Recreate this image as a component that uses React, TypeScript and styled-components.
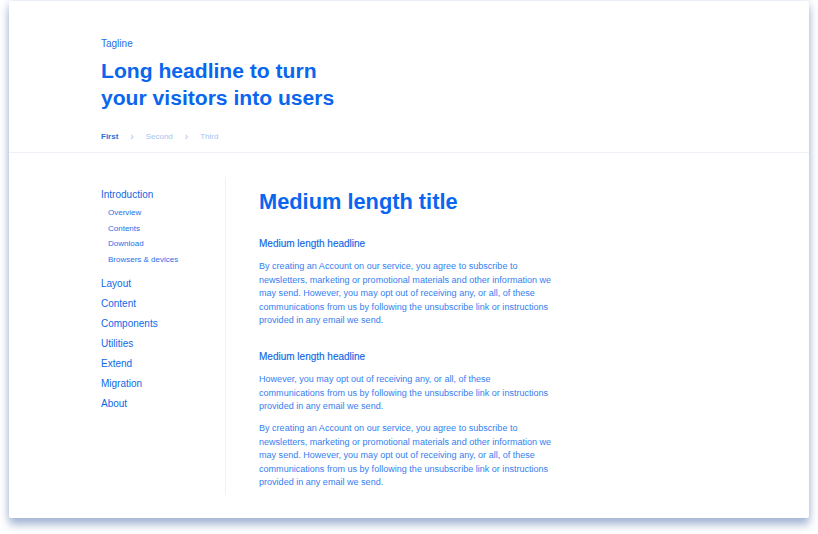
import styled, { createGlobalStyle } from "styled-components";

const GlobalStyle = createGlobalStyle`
    * {
        box-sizing: border-box;
    }
    body {
        margin: 0;
        background: #ffffff;
        font-family: "Liberation Sans", Arial, sans-serif;
    }
`;

const Page = styled.div`
    padding: 1px 9px 0;
    height: 534px;
`;

const Card = styled.div`
    width: 800px;
    height: 517px;
    background: #ffffff;
    border-radius: 2px;
    box-shadow: 0 7px 8px rgba(80, 110, 170, 0.45), 0 0 9px rgba(120, 145, 200, 0.3);
`;

const Header = styled.header`
    padding: 37px 92px 10px;
    border-bottom: 1px solid #eef2f8;
`;

const Tagline = styled.div`
    font-size: 10px;
    line-height: 12px;
    color: #1f6fe8;
`;

const Headline = styled.h1`
    margin: 7px 0 0;
    font-size: 21.1px;
    line-height: 27px;
    font-weight: 700;
    color: #0a66ee;
`;

const Crumbs = styled.nav`
    margin-top: 21px;
    display: flex;
    align-items: center;
    gap: 12px;
    font-size: 8px;
    line-height: 10px;
`;

const Crumb = styled.span<{ $active?: boolean }>`
    color: ${(props) => (props.$active ? "#2a6fd8" : "#a6c4f2")};
    font-weight: ${(props) => (props.$active ? 700 : 400)};
`;

const Sep = styled.span`
    color: #a6c4f2;
    font-size: 10px;
`;

const Body = styled.div`
    display: flex;
    padding: 24px 0 0 92px;
`;

const Sidebar = styled.aside`
    width: 125px;
    height: 318px;
    padding-top: 8px;
    border-right: 1px solid #eef2f8;
`;

const NavItem = styled.div`
    font-size: 10px;
    line-height: 20px;
    color: #0f67e6;
`;

const SubList = styled.div`
    padding: 0 0 7px 7px;
`;

const SubItem = styled.div`
    font-size: 8px;
    line-height: 15.6px;
    color: #1f6fe8;
`;

const Main = styled.main`
    padding: 10.5px 0 0 33px;
    width: 340px;
`;

const Title = styled.h2`
    margin: 0;
    font-size: 21.8px;
    line-height: 27px;
    font-weight: 700;
    color: #0a66ee;
`;

const Section = styled.section`
    margin-top: 23.5px;
    & + & {
        margin-top: 23.5px;
    }
`;

const SubHead = styled.h3`
    margin: 0 0 10px;
    font-size: 10px;
    line-height: 12px;
    font-weight: 400;
    color: #0f67e6;
    -webkit-text-stroke: 0.15px #0f67e6;
`;

const Para = styled.p`
    margin: 0;
    width: 298px;
    font-size: 9.05px;
    line-height: 13.5px;
    color: #3580ef;
    & + & {
        margin-top: 8.5px;
    }
`;

const subItems = ["Overview", "Contents", "Download", "Browsers & devices"];
const navItems = ["Layout", "Content", "Components", "Utilities", "Extend", "Migration", "About"];

const longText =
    "By creating an Account on our service, you agree to subscribe to newsletters, marketing or promotional materials and other information we may send. However, you may opt out of receiving any, or all, of these communications from us by following the unsubscribe link or instructions provided in any email we send.";
const shortText =
    "However, you may opt out of receiving any, or all, of these communications from us by following the unsubscribe link or instructions provided in any email we send.";

function App() {
    return (
        <Page>
            <GlobalStyle />
            <Card>
                <Header>
                    <Tagline>Tagline</Tagline>
                    <Headline>
                        Long headline to turn
                        <br />
                        your visitors into users
                    </Headline>
                    <Crumbs>
                        <Crumb $active>First</Crumb>
                        <Sep>›</Sep>
                        <Crumb>Second</Crumb>
                        <Sep>›</Sep>
                        <Crumb>Third</Crumb>
                    </Crumbs>
                </Header>
                <Body>
                    <Sidebar>
                        <NavItem>Introduction</NavItem>
                        <SubList>
                            {subItems.map((item) => (
                                <SubItem key={item}>{item}</SubItem>
                            ))}
                        </SubList>
                        {navItems.map((item) => (
                            <NavItem key={item}>{item}</NavItem>
                        ))}
                    </Sidebar>
                    <Main>
                        <Title>Medium length title</Title>
                        <Section>
                            <SubHead>Medium length headline</SubHead>
                            <Para>{longText}</Para>
                        </Section>
                        <Section>
                            <SubHead>Medium length headline</SubHead>
                            <Para>{shortText}</Para>
                            <Para>{longText}</Para>
                        </Section>
                    </Main>
                </Body>
            </Card>
        </Page>
    );
}

export default App;
